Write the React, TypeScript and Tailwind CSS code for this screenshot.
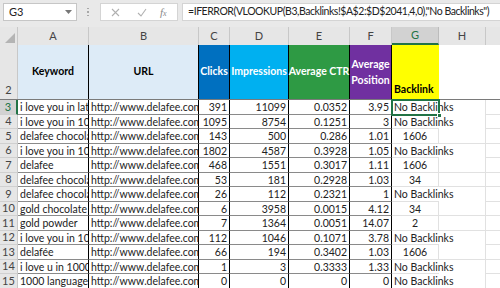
import React from "react";

type Row = {
  n: number;
  kw: string;
  clicks: string;
  imp: string;
  ctr: string;
  pos: string;
  back: string;
};

const rows: Row[] = [
  { n: 3, kw: "i love you in latin", clicks: "391", imp: "11099", ctr: "0.0352", pos: "3.95", back: "No Backlinks" },
  { n: 4, kw: "i love you in 1000 languages", clicks: "1095", imp: "8754", ctr: "0.1251", pos: "3", back: "No Backlinks" },
  { n: 5, kw: "delafee chocolate", clicks: "143", imp: "500", ctr: "0.286", pos: "1.01", back: "1606" },
  { n: 6, kw: "i love you in 1000 languages", clicks: "1802", imp: "4587", ctr: "0.3928", pos: "1.05", back: "No Backlinks" },
  { n: 7, kw: "delafee", clicks: "468", imp: "1551", ctr: "0.3017", pos: "1.11", back: "1606" },
  { n: 8, kw: "delafee chocolate", clicks: "53", imp: "181", ctr: "0.2928", pos: "1.03", back: "34" },
  { n: 9, kw: "delafee chocolate", clicks: "26", imp: "112", ctr: "0.2321", pos: "1", back: "No Backlinks" },
  { n: 10, kw: "gold chocolate", clicks: "6", imp: "3958", ctr: "0.0015", pos: "4.12", back: "34" },
  { n: 11, kw: "gold powder", clicks: "7", imp: "1364", ctr: "0.0051", pos: "14.07", back: "2" },
  { n: 12, kw: "i love you in 1000 languages", clicks: "112", imp: "1046", ctr: "0.1071", pos: "3.78", back: "No Backlinks" },
  { n: 13, kw: "delafée", clicks: "66", imp: "194", ctr: "0.3402", pos: "1.03", back: "1606" },
  { n: 14, kw: "i love u in 1000", clicks: "1", imp: "3", ctr: "0.3333", pos: "1.33", back: "No Backlinks" },
  { n: 15, kw: "1000 languages", clicks: "0", imp: "0", ctr: "0", pos: "0", back: "No Backlinks" },
];

const letters = [
  { l: "A", w: "w-[71px]" },
  { l: "B", w: "w-[110px]" },
  { l: "C", w: "w-[31px]" },
  { l: "D", w: "w-[59px]" },
  { l: "E", w: "w-[61px]" },
  { l: "F", w: "w-[42px]" },
  { l: "G", w: "w-[47px]" },
  { l: "H", w: "w-[47px]" },
];

function FormulaBar() {
  return (
    <div className="flex h-[27px] items-start bg-[#e9e9e9] pt-[3px]">
      <div className="ml-[3px] flex h-[18px] w-[74px] items-center justify-between border border-[#c6c6c6] bg-white pl-[5px] pr-[4px] text-[11px] text-[#222]">
        <span>G3</span>
        <svg width="7" height="4" viewBox="0 0 7 4">
          <path d="M0 0h7L3.5 4z" fill="#777" />
        </svg>
      </div>
      <div className="ml-[9px] flex h-[18px] w-[4px] flex-col items-center justify-center gap-[2px]">
        <span className="h-[1.5px] w-[1.5px] bg-[#a8a8a8]" />
        <span className="h-[1.5px] w-[1.5px] bg-[#a8a8a8]" />
        <span className="h-[1.5px] w-[1.5px] bg-[#a8a8a8]" />
      </div>
      <div className="ml-[10px] flex h-[18px] w-[78px] items-center border border-[#d4d4d4] bg-white">
        <svg className="ml-[10px]" width="9" height="9" viewBox="0 0 9 9">
          <path d="M1 1l7 7M8 1L1 8" stroke="#b0b0b0" strokeWidth="1.1" />
        </svg>
        <svg className="ml-[17px]" width="10" height="9" viewBox="0 0 10 9">
          <path d="M1 5l3 3 5-7" stroke="#b0b0b0" strokeWidth="1.1" fill="none" />
        </svg>
        <span className="ml-[13px] font-['Liberation_Serif',serif] text-[11px] italic leading-none text-[#888]">
          f<span className="text-[8px]">x</span>
        </span>
      </div>
      <div className="ml-[4px] flex h-[18px] flex-1 items-center overflow-hidden whitespace-nowrap border border-r-0 border-[#d4d4d4] bg-white pl-[5px] text-[10.5px] tracking-[-0.45px] text-[#222]">
        =IFERROR(VLOOKUP(B3,Backlinks!$A$2:$D$2041,4,0),"No Backlinks")
      </div>
    </div>
  );
}

function ColumnHeaders() {
  return (
    <div className="flex h-[18px] bg-[#e6e6e6] text-[11px] text-[#444]">
      <div className="relative w-[18px] border-r border-[#c8c8c8]">
        <svg className="absolute bottom-[2px] right-[2px]" width="10" height="10" viewBox="0 0 10 10">
          <path d="M10 0v10H0z" fill="#b4b4b4" />
        </svg>
      </div>
      {letters.map((c) => (
        <div
          key={c.l}
          className={`${c.w} flex items-center justify-center border-r ${
            c.l === "G"
              ? "border-[#bcbcbc] border-b-2 border-b-[#217346] bg-[#d2d2d2] text-[#217346]"
              : "border-[#c8c8c8]"
          }`}
        >
          {c.l}
        </div>
      ))}
      <div className="flex-1" />
    </div>
  );
}

function HeaderRow() {
  return (
    <div className="flex h-[55px] border-b border-[#7a7a7a] text-[10.5px] font-bold whitespace-nowrap">
      <div className="flex w-[18px] items-end justify-center border-r border-[#c8c8c8] bg-[#e6e6e6] pb-[1px] text-[11px] font-normal text-[#444]">
        2
      </div>
      <div className="flex w-[71px] items-center justify-center border-r border-black bg-[#ddebf7] text-black">Keyword</div>
      <div className="flex w-[110px] items-center justify-center border-r border-black bg-[#ddebf7] text-black">URL</div>
      <div className="flex w-[31px] items-center justify-center border-r border-black bg-[#0070c0] text-white">Clicks</div>
      <div className="flex w-[59px] items-center justify-center border-r border-black bg-[#00b0f0] text-white">Impressions</div>
      <div className="flex w-[61px] items-center justify-center border-r border-black bg-[#2e9a44] text-white">Average CTR</div>
      <div className="flex w-[42px] flex-col items-center justify-center border-r border-black bg-[#7030a0] leading-[16px] text-white">
        <span>Average</span>
        <span>Position</span>
      </div>
      <div className="flex w-[47px] items-end bg-[#ffff00] pb-[1px] pl-[2px] text-black">Backlink</div>
      <div className="flex-1 bg-white" />
    </div>
  );
}

function DataRow({ r }: { r: Row }) {
  const sel = r.n === 3;
  const text = r.back === "No Backlinks";
  return (
    <div className="flex h-[14.5px] text-[10.5px] leading-[14px] text-[#222]">
      <div
        className={`flex w-[18px] items-end justify-center border-b border-[#d0d0d0] text-[11px] ${
          sel ? "border-r-2 border-r-[#217346] bg-[#d2d2d2] text-[#217346]" : "border-r border-r-[#c8c8c8] bg-[#e6e6e6] text-[#444]"
        }`}
      >
        {r.n}
      </div>
      <div className="w-[71px] overflow-hidden whitespace-nowrap border-b border-r border-b-[#8a8a8a] border-r-black pl-[2px]">{r.kw}</div>
      <div className="w-[110px] overflow-hidden whitespace-nowrap border-b border-r border-b-[#8a8a8a] border-r-black pl-[2px]">
        http://www.delafee.com/
      </div>
      <div className="w-[31px] border-b border-r border-b-[#8a8a8a] border-r-black pr-[2px] text-right">{r.clicks}</div>
      <div className="w-[59px] border-b border-r border-b-[#8a8a8a] border-r-black pr-[2px] text-right">{r.imp}</div>
      <div className="w-[61px] border-b border-r border-b-[#8a8a8a] border-r-black pr-[2px] text-right">{r.ctr}</div>
      <div className="w-[42px] border-b border-r border-b-[#8a8a8a] border-r-black pr-[2px] text-right">{r.pos}</div>
      <div
        className={`relative w-[47px] whitespace-nowrap ${text ? "pl-[2px]" : "border-r border-[#e1e1e1] text-center"} ${
          sel ? "outline-2 -outline-offset-1 outline-[#217346]" : "border-b border-b-[#e1e1e1]"
        }`}
      >
        {r.back}
        {sel && <span className="absolute -bottom-[3px] -right-[3px] h-[5px] w-[5px] border border-white bg-[#217346]" />}
      </div>
      <div className={`w-[47px] border-r border-[#e1e1e1] ${text ? "" : "border-b border-b-[#e1e1e1]"}`} />
      <div className="flex-1 border-b border-[#e1e1e1]" />
    </div>
  );
}

export default function App() {
  return (
    <div className="h-[288px] w-[500px] overflow-hidden bg-white font-['Lato',sans-serif]">
      <FormulaBar />
      <ColumnHeaders />
      <HeaderRow />
      {rows.map((r) => (
        <DataRow key={r.n} r={r} />
      ))}
    </div>
  );
}
